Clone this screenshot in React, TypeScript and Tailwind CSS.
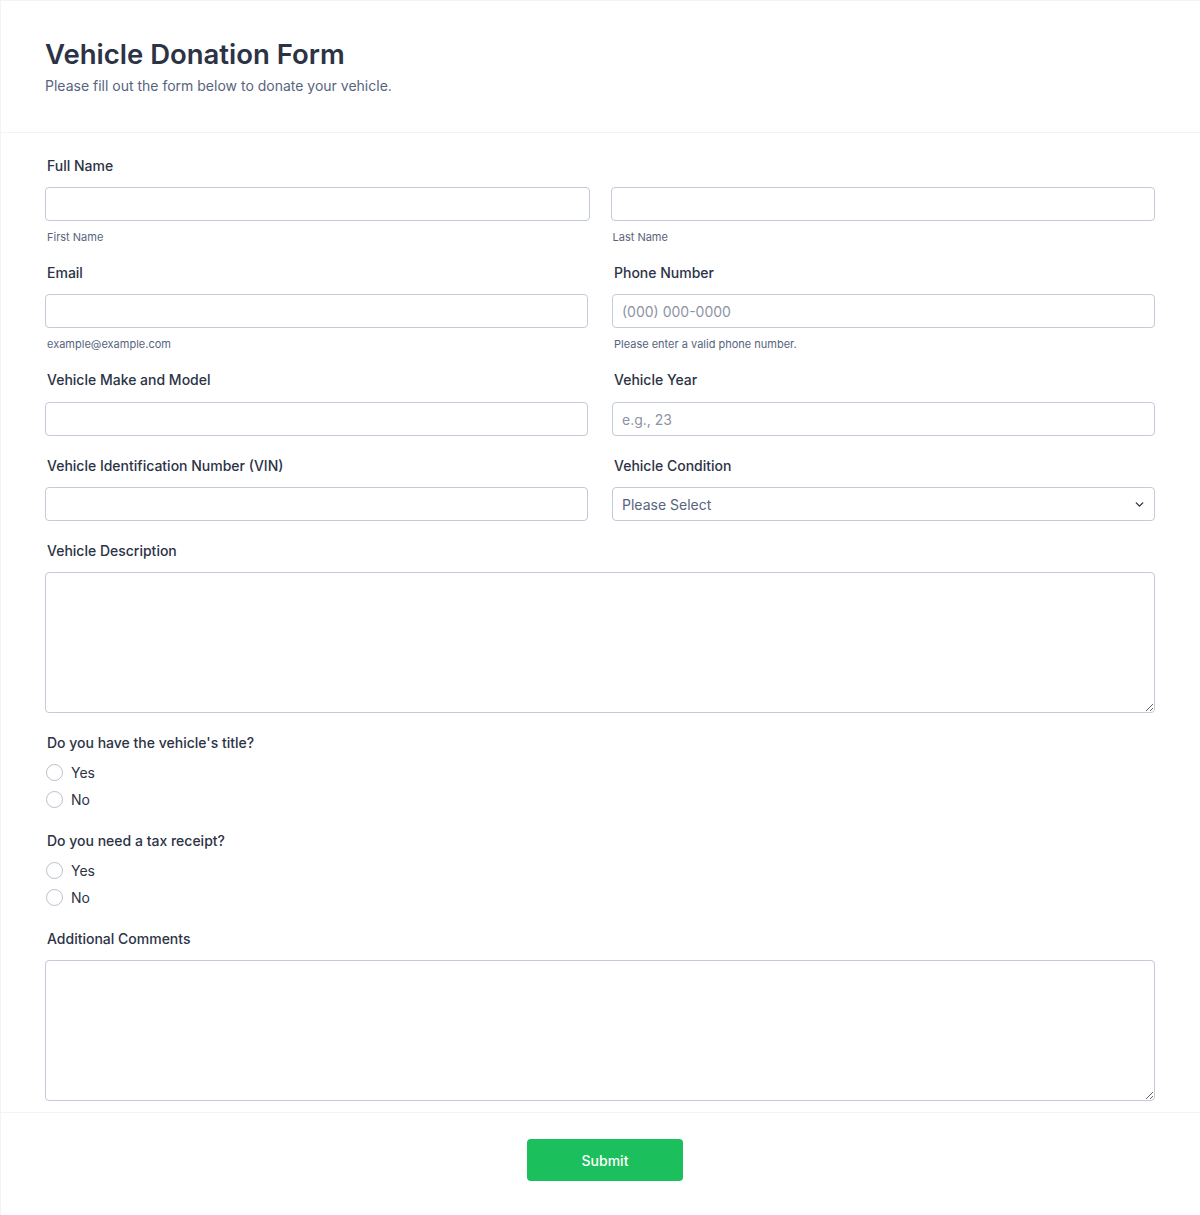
import { ChevronDown } from 'lucide-react'

const font = { fontFamily: 'Inter, "Noto Sans", sans-serif' }

function Label({ children, className = '' }: { children: React.ReactNode; className?: string }) {
  return <div className={`pl-[2px] text-[14px] leading-5 font-medium text-[#2c3345] ${className}`}>{children}</div>
}

function Sub({ children }: { children: React.ReactNode }) {
  return <div className="pl-[2px] mt-[8px] text-[11px] leading-4 text-[#57647e]">{children}</div>
}

function Input({ placeholder }: { placeholder?: string }) {
  return (
    <input
      type="text"
      placeholder={placeholder}
      className="block w-full h-[34px] rounded-[4px] border border-[#c3cad8] bg-white px-[9px] text-[14px] text-[#2c3345] placeholder:text-[#8d93a3] outline-none"
    />
  )
}

function Radio({ label }: { label: string }) {
  return (
    <label className="flex items-center gap-[8px] h-5 pl-[1px]">
      <span className="w-[17px] h-[17px] rounded-full border border-[#b8bfcc] bg-white" />
      <span className="text-[14px] text-[#2c3345]">{label}</span>
    </label>
  )
}

export default function App() {
  return (
    <div style={font} className="w-[1200px] min-h-[1215px] bg-white border-t border-l border-[#f1f3f7]">
      {/* header */}
      <div className="pl-[44px] pr-[45px] pt-[35px] pb-[36px] border-b border-[#f1f3f7]">
        <h1 className="text-[27.5px] leading-[36px] font-semibold text-[#2c3345]">Vehicle Donation Form</h1>
        <p className="mt-[4px] text-[14px] leading-5 text-[#57647e]">Please fill out the form below to donate your vehicle.</p>
      </div>

      {/* fields */}
      <div className="pl-[44px] pr-[45px] pt-[23px] pb-[11px] border-b border-[#f1f3f7]">
        <Label>Full Name</Label>
        <div className="grid grid-cols-2 gap-x-[21px] mt-[11px]">
          <div>
            <Input />
            <Sub>First Name</Sub>
          </div>
          <div>
            <Input />
            <Sub>Last Name</Sub>
          </div>
        </div>

        <div className="grid grid-cols-2 gap-x-[24px] mt-[18px]">
          <div>
            <Label className="mb-[11px]">Email</Label>
            <Input />
            <Sub>example@example.com</Sub>
          </div>
          <div>
            <Label className="mb-[11px]">Phone Number</Label>
            <Input placeholder="(000) 000-0000" />
            <Sub>Please enter a valid phone number.</Sub>
          </div>
        </div>

        <div className="grid grid-cols-2 gap-x-[24px] mt-[18px]">
          <div>
            <Label className="mb-[12px]">Vehicle Make and Model</Label>
            <Input />
          </div>
          <div>
            <Label className="mb-[12px]">Vehicle Year</Label>
            <Input placeholder="e.g., 23" />
          </div>
        </div>

        <div className="grid grid-cols-2 gap-x-[24px] mt-[20px]">
          <div>
            <Label className="mb-[11px]">Vehicle Identification Number (VIN)</Label>
            <Input />
          </div>
          <div>
            <Label className="mb-[11px]">Vehicle Condition</Label>
            <div className="relative">
              <select
                defaultValue=""
                className="block w-full h-[34px] appearance-none rounded-[4px] border border-[#c3cad8] bg-white px-[9px] text-[14px] text-[#57647e] outline-none"
              >
                <option value="" disabled>Please Select</option>
                <option>Excellent</option>
                <option>Good</option>
                <option>Fair</option>
                <option>Poor</option>
              </select>
              <ChevronDown size={13} strokeWidth={2.5} className="absolute right-[9px] top-[11px] text-[#2c3345] pointer-events-none" />
            </div>
          </div>
        </div>

        <Label className="mt-[20px] mb-[11px]">Vehicle Description</Label>
        <textarea className="block w-full h-[141px] rounded-[4px] border border-[#c3cad8] bg-white px-[9px] py-[6px] text-[14px] outline-none" />

        <Label className="mt-[20px]">Do you have the vehicle's title?</Label>
        <div className="mt-[9px] flex flex-col gap-[7px]">
          <Radio label="Yes" />
          <Radio label="No" />
        </div>

        <Label className="mt-[22px]">Do you need a tax receipt?</Label>
        <div className="mt-[9px] flex flex-col gap-[7px]">
          <Radio label="Yes" />
          <Radio label="No" />
        </div>

        <Label className="mt-[22px] mb-[11px]">Additional Comments</Label>
        <textarea className="block w-full h-[141px] rounded-[4px] border border-[#c3cad8] bg-white px-[9px] py-[6px] text-[14px] outline-none" />
      </div>

      {/* footer */}
      <div className="flex justify-center pl-[9px] pt-[26px] pb-[34px]">
        <button
          type="button"
          className="w-[156px] h-[42px] rounded-[4px] bg-[#1bbf5c] text-[14px] font-medium text-white"
        >
          Submit
        </button>
      </div>
    </div>
  )
}
